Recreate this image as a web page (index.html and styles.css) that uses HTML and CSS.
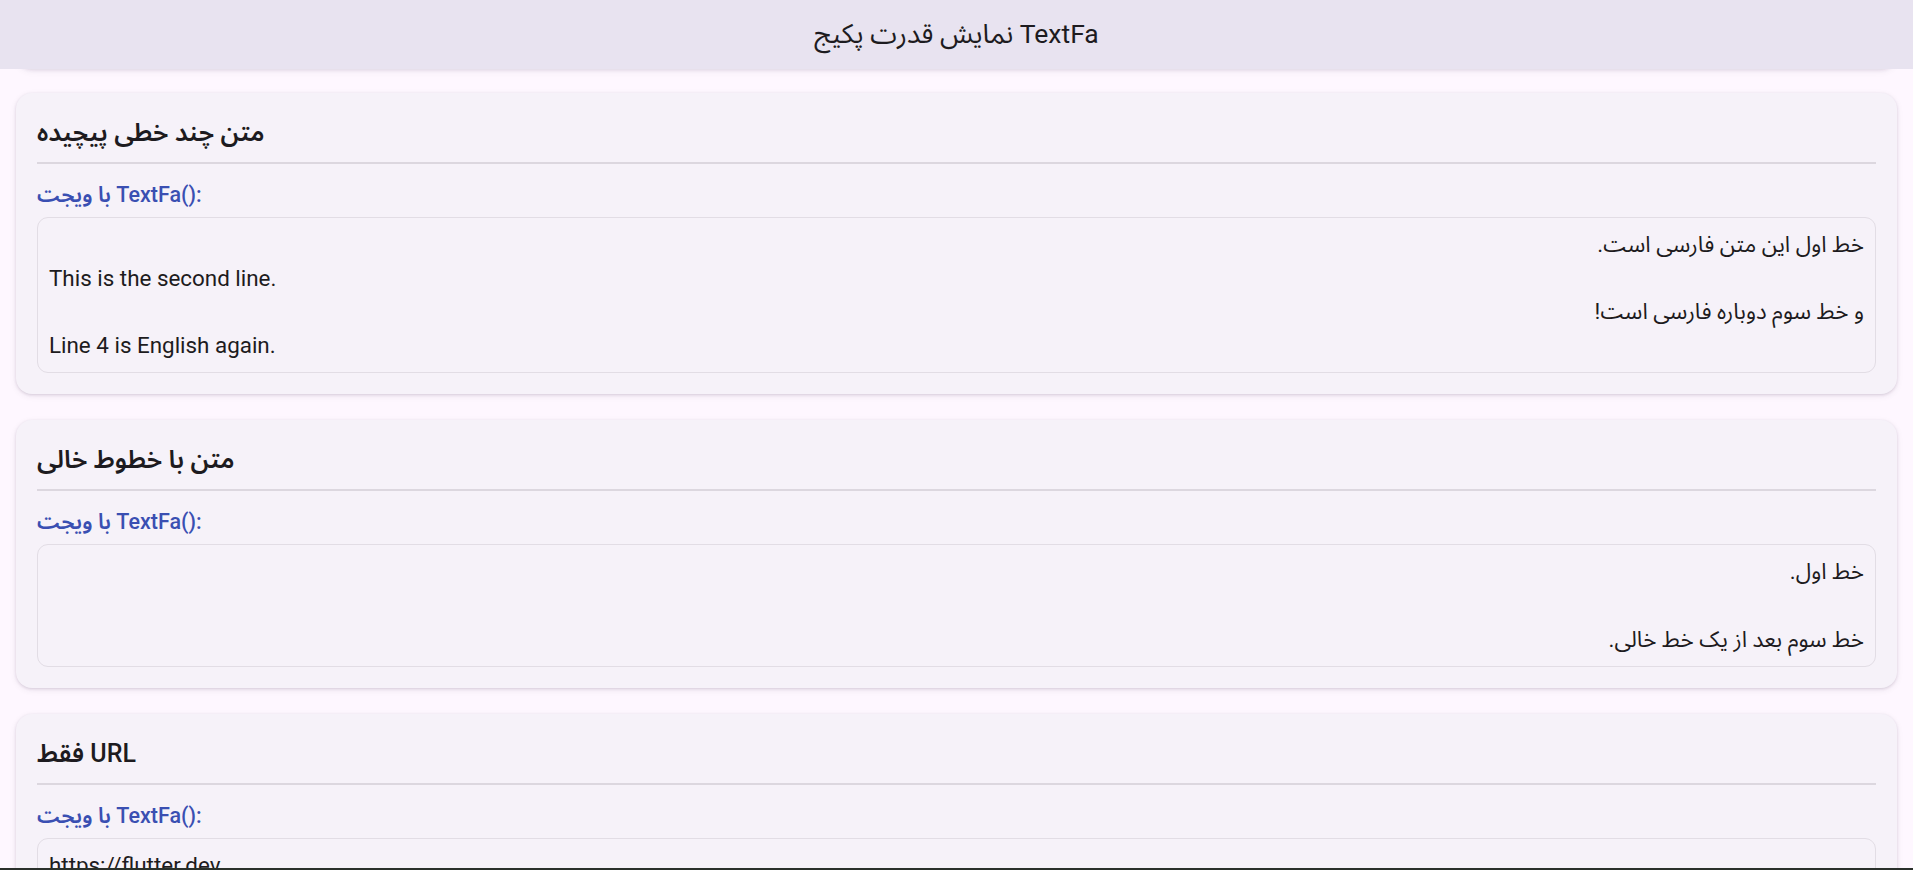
FILE: index.html
```html
<!DOCTYPE html>
<html lang="fa">
<head>
<meta charset="utf-8">
<title>TextFa</title>
<link rel="stylesheet" href="styles.css">
</head>
<body>
<header class="appbar">
  <h1 class="appbar-title" dir="ltr"><span class="fa">نمایش قدرت پکیج</span> TextFa</h1>
</header>
<main class="list">
  <div class="card card-tail"></div>

  <section class="card">
    <h2 class="card-title" dir="ltr"><span class="fa">متن چند خطی پیچیده</span></h2>
    <div class="divider"></div>
    <div class="label" dir="ltr"><span class="fa">با ویجت</span> TextFa():</div>
    <div class="textbox">
      <p class="line" dir="rtl">خط اول این متن فارسی است.</p>
      <p class="line" dir="ltr">This is the second line.</p>
      <p class="line" dir="rtl">و خط سوم دوباره فارسی است!</p>
      <p class="line" dir="ltr">Line 4 is English again.</p>
    </div>
  </section>

  <section class="card">
    <h2 class="card-title" dir="ltr"><span class="fa">متن با خطوط خالی</span></h2>
    <div class="divider"></div>
    <div class="label" dir="ltr"><span class="fa">با ویجت</span> TextFa():</div>
    <div class="textbox">
      <p class="line" dir="rtl">خط اول.</p>
      <p class="line" dir="rtl"></p>
      <p class="line" dir="rtl">خط سوم بعد از یک خط خالی.</p>
    </div>
  </section>

  <section class="card">
    <h2 class="card-title" dir="ltr"><span class="fa">فقط</span> URL</h2>
    <div class="divider"></div>
    <div class="label" dir="ltr"><span class="fa">با ویجت</span> TextFa():</div>
    <div class="textbox">
      <p class="line" dir="ltr">https://flutter.dev</p>
    </div>
  </section>
</main>
<div class="bottom-edge"></div>
</body>
</html>
```
FILE: styles.css
```css
* {
  box-sizing: border-box;
}

html, body {
  margin: 0;
  padding: 0;
  height: 100%;
  overflow: hidden;
}

body {
  background: #fef7ff;
  color: #1d1b20;
  font-family: Roboto, "Noto Sans Arabic", Vazirmatn, "Noto Sans", "DejaVu Sans", sans-serif;
  direction: ltr;
}

.appbar {
  position: relative;
  z-index: 2;
  height: 69px;
  background: #e8e3f0;
  display: flex;
  align-items: center;
  justify-content: center;
}

.appbar-title {
  margin: 0;
  font-size: 26.5px;
  font-weight: 400;
  line-height: 32px;
  padding-bottom: 2px;
}

.appbar-title .fa {
  font-size: 27px;
}

.list {
  display: flex;
  flex-direction: column;
  gap: 26px;
  padding: 0 16px;
}

.card {
  background: #f6f2f9;
  border-radius: 16px;
  padding: 22px 21px 21px;
  box-shadow: 0 1px 3px rgba(40, 20, 60, 0.14), 0 2px 7px rgba(40, 20, 60, 0.07);
}

.card-tail {
  height: 40px;
  margin-top: -42px;
  padding: 0;
  box-shadow: 0 2px 4px rgba(40, 20, 60, 0.16), 0 3px 9px rgba(40, 20, 60, 0.08);
}

.card-title {
  margin: 0;
  font-size: 25px;
  font-weight: 500;
  line-height: 35px;
}

.card-title .fa {
  font-size: 25.5px;
  font-weight: 600;
}

.divider {
  height: 2px;
  background: #dcd7df;
  margin-top: 12px;
}

.label {
  margin-top: 16px;
  font-size: 21.5px;
  font-weight: 500;
  line-height: 30px;
  color: #3a4fb2;
}

.label .fa {
  font-weight: 600;
  font-size: 21.5px;
}

.textbox {
  margin-top: 7px;
  border: 1px solid #e2dde5;
  border-radius: 11px;
  padding: 10px 11px;
}

.line {
  margin: 0;
  font-size: 22.4px;
  line-height: 33.6px;
  min-height: 33.6px;
}

.bottom-edge {
  position: fixed;
  left: 0;
  right: 0;
  bottom: 0;
  height: 2px;
  background: #2a302b;
  z-index: 5;
}
```
